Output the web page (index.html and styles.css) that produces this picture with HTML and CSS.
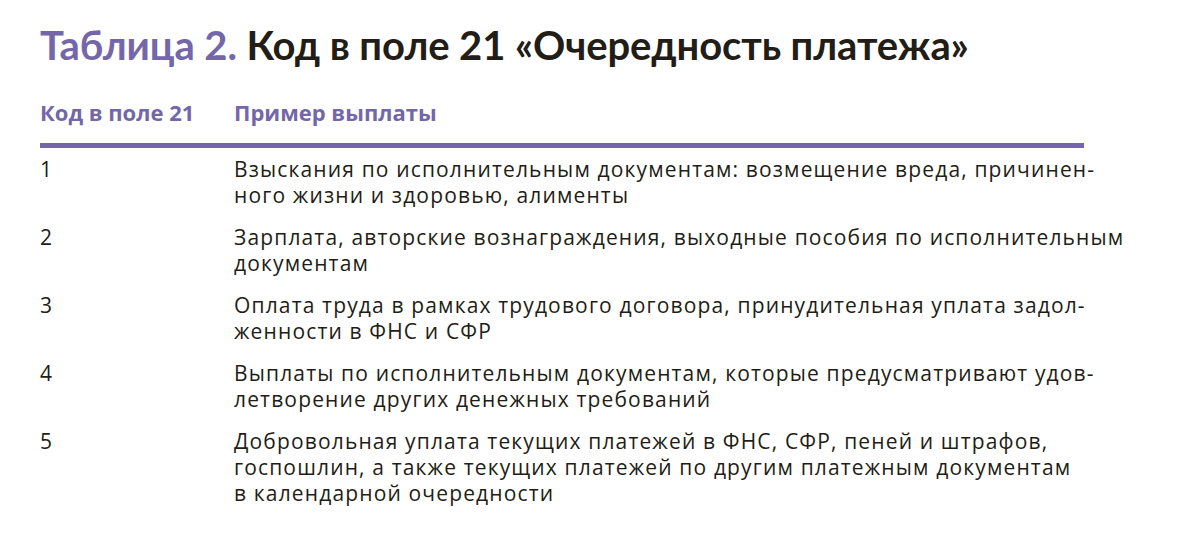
FILE: index.html
```html
<!DOCTYPE html>
<html lang="ru">
<head>
<meta charset="utf-8">
<link rel="stylesheet" href="styles.css">
</head>
<body>
<div class="page">
  <h1 class="title"><span class="accent">Таблица 2.</span> Код в поле 21 «Очередность платежа»</h1>
  <div class="table">
    <div class="head">
      <div class="hcell">Код в поле 21</div>
      <div class="hcell">Пример выплаты</div>
    </div>
    <div class="row">
      <div class="code">1</div>
      <div class="text">Взыскания по исполнительным документам: возмещение вреда, причинен-<br>ного жизни и здоровью, алименты</div>
    </div>
    <div class="row">
      <div class="code">2</div>
      <div class="text">Зарплата, авторские вознаграждения, выходные пособия по исполнительным<br>документам</div>
    </div>
    <div class="row">
      <div class="code">3</div>
      <div class="text">Оплата труда в рамках трудового договора, принудительная уплата задол-<br>женности в ФНС и СФР</div>
    </div>
    <div class="row">
      <div class="code">4</div>
      <div class="text">Выплаты по исполнительным документам, которые предусматривают удов-<br>летворение других денежных требований</div>
    </div>
    <div class="row">
      <div class="code">5</div>
      <div class="text">Добровольная уплата текущих платежей в ФНС, СФР, пеней и штрафов,<br>госпошлин, а также текущих платежей по другим платежным документам<br>в календарной очередности</div>
    </div>
  </div>
</div>
</body>
</html>
```

FILE: styles.css
```css
html, body {
  margin: 0;
  padding: 0;
  background: #ffffff;
}
.page {
  padding: 20px 0 0 40px;
  width: 1044px;
  font-family: Lato, "Noto Sans", sans-serif;
  color: #221d16;
}
.title {
  margin: 0;
  font-size: 40px;
  font-weight: 700;
  line-height: 50px;
  letter-spacing: -0.1px;
  white-space: nowrap;
}
.accent {
  color: #7467a9;
}
.table {
  margin-top: 28px;
}
.head {
  display: grid;
  grid-template-columns: 194px 1fr;
  border-bottom: 5px solid #7467a9;
  padding-bottom: 17px;
}
.hcell {
  font-family: "Open Sans", Lato, sans-serif;
  font-size: 22px;
  font-weight: 700;
  color: #7467a9;
  line-height: 28px;
  letter-spacing: 0;
}
.row {
  display: grid;
  grid-template-columns: 194px 1fr;
  padding-top: 8px;
  padding-bottom: 8px;
  font-family: "Open Sans", Lato, sans-serif;
  font-size: 21px;
  line-height: 26px;
}
.row:first-of-type {
  padding-top: 7px;
}
.text {
  white-space: nowrap;
  letter-spacing: 1.15px;
}
```
